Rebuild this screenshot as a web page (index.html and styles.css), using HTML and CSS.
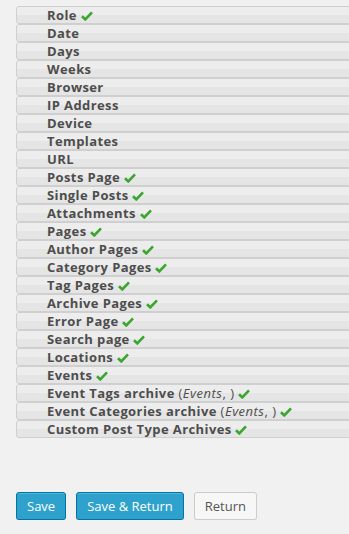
FILE: index.html
```html
<!DOCTYPE html>
<html lang="en">
<head>
  <meta charset="UTF-8">
  <meta name="viewport" content="width=device-width, initial-scale=1.0">
  <link rel="stylesheet" href="styles.css">
</head>
<body>
  <div class="rules">
    <div class="rule">Role <span class="ok"></span></div>
    <div class="rule">Date</div>
    <div class="rule">Days</div>
    <div class="rule">Weeks</div>
    <div class="rule">Browser</div>
    <div class="rule">IP Address</div>
    <div class="rule">Device</div>
    <div class="rule">Templates</div>
    <div class="rule">URL</div>
    <div class="rule">Posts Page <span class="ok"></span></div>
    <div class="rule">Single Posts <span class="ok"></span></div>
    <div class="rule">Attachments <span class="ok"></span></div>
    <div class="rule">Pages <span class="ok"></span></div>
    <div class="rule">Author Pages <span class="ok"></span></div>
    <div class="rule">Category Pages <span class="ok"></span></div>
    <div class="rule">Tag Pages <span class="ok"></span></div>
    <div class="rule">Archive Pages <span class="ok"></span></div>
    <div class="rule">Error Page <span class="ok"></span></div>
    <div class="rule">Search page <span class="ok"></span></div>
    <div class="rule">Locations <span class="ok"></span></div>
    <div class="rule">Events <span class="ok"></span></div>
    <div class="rule">Event Tags archive <span class="note">(<i>Events</i>, )</span> <span class="ok"></span></div>
    <div class="rule">Event Categories archive <span class="note">(<i>Events</i>, )</span> <span class="ok"></span></div>
    <div class="rule">Custom Post Type Archives <span class="ok"></span></div>
  </div>

  <div class="actions">
    <button class="btn btn-primary">Save</button>
    <button class="btn btn-primary">Save &amp; Return</button>
    <button class="btn">Return</button>
  </div>

  <script>
    // fill every check mark with the same svg
    var tick = '<svg width="12" height="10" viewBox="0 0 12 10"><path d="M1 5.2 L4.3 8.4 L11 1.4" fill="none" stroke="#3aa62f" stroke-width="2.6" stroke-linejoin="miter"/></svg>';
    document.querySelectorAll('.ok').forEach(function (el) {
      el.innerHTML = tick;
    });
  </script>
</body>
</html>
```

FILE: styles.css
```css
body {
  background-color: #f1f1f1;
  color: #4d4d4d;
  font-family: "Open Sans", Arial, sans-serif;
  margin: 0;
  padding: 6px 0 0 16px;
}
.rules {
  margin-right: -10px;
}
.rule {
  height: 16px;
  line-height: 16px;
  border: 1px solid #cfcfcf;
  border-radius: 3px 0 0 3px;
  background: linear-gradient(#ededed 0, #ededed 50%, #e5e5e5 50%, #e5e5e5 100%);
  padding-left: 30px;
  font-size: 13px;
  font-weight: bold;
  letter-spacing: 0.4px;
  white-space: nowrap;
}
.note {
  font-weight: normal;
  letter-spacing: 0.5px;
}
.ok {
  display: inline-block;
  vertical-align: -1px;
}
.ok svg {
  display: block;
}
.actions {
  display: flex;
  gap: 10px;
  margin-top: 54px;
}
.btn {
  height: 28px;
  padding: 0 10px;
  font-family: "Open Sans", Arial, sans-serif;
  font-size: 13px;
  color: #555;
  background-color: #f7f7f7;
  border: 1px solid #ccc;
  border-radius: 3px;
  box-shadow: 0 1px 0 #e6e6e6;
}
.btn-primary {
  color: #fff;
  background-color: #2ea2cc;
  border-color: #0074a2;
  box-shadow: inset 0 1px 0 rgba(120, 200, 230, 0.5), 0 1px 0 rgba(0, 0, 0, 0.15);
}
```
